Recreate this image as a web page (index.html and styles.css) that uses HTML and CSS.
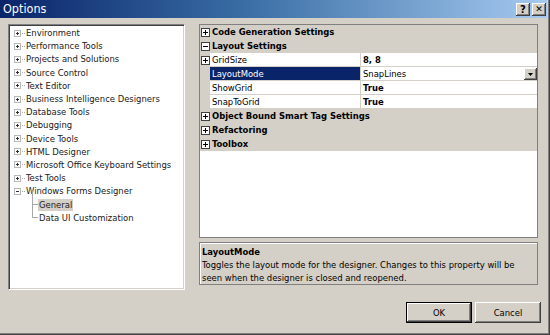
FILE: index.html
```html
<!DOCTYPE html>
<html lang="en">
<head>
    <meta charset="UTF-8">
    <title>Options</title>
    <link rel="stylesheet" href="styles.css">
</head>
<body>
    <div class="window">
        <div class="titlebar">
            <span class="title">Options</span>
            <div class="caption-buttons">
                <span class="cap-btn">?</span>
                <span class="cap-btn close">&#x2715;</span>
            </div>
        </div>

        <div class="main">
            <div class="tree">
                <div class="node"><svg class="box" width="9" height="9"><rect x="1.5" y="1.5" width="6" height="6" fill="#fff" stroke="#b8b8b8"/><path d="M3 4.5h3M4.5 3v3" stroke="#303030"/></svg><span class="dots"></span><span class="label">Environment</span></div>
                <div class="node"><svg class="box" width="9" height="9"><rect x="1.5" y="1.5" width="6" height="6" fill="#fff" stroke="#b8b8b8"/><path d="M3 4.5h3M4.5 3v3" stroke="#303030"/></svg><span class="dots"></span><span class="label">Performance Tools</span></div>
                <div class="node"><svg class="box" width="9" height="9"><rect x="1.5" y="1.5" width="6" height="6" fill="#fff" stroke="#b8b8b8"/><path d="M3 4.5h3M4.5 3v3" stroke="#303030"/></svg><span class="dots"></span><span class="label">Projects and Solutions</span></div>
                <div class="node"><svg class="box" width="9" height="9"><rect x="1.5" y="1.5" width="6" height="6" fill="#fff" stroke="#b8b8b8"/><path d="M3 4.5h3M4.5 3v3" stroke="#303030"/></svg><span class="dots"></span><span class="label">Source Control</span></div>
                <div class="node"><svg class="box" width="9" height="9"><rect x="1.5" y="1.5" width="6" height="6" fill="#fff" stroke="#b8b8b8"/><path d="M3 4.5h3M4.5 3v3" stroke="#303030"/></svg><span class="dots"></span><span class="label">Text Editor</span></div>
                <div class="node"><svg class="box" width="9" height="9"><rect x="1.5" y="1.5" width="6" height="6" fill="#fff" stroke="#b8b8b8"/><path d="M3 4.5h3M4.5 3v3" stroke="#303030"/></svg><span class="dots"></span><span class="label">Business Intelligence Designers</span></div>
                <div class="node"><svg class="box" width="9" height="9"><rect x="1.5" y="1.5" width="6" height="6" fill="#fff" stroke="#b8b8b8"/><path d="M3 4.5h3M4.5 3v3" stroke="#303030"/></svg><span class="dots"></span><span class="label">Database Tools</span></div>
                <div class="node"><svg class="box" width="9" height="9"><rect x="1.5" y="1.5" width="6" height="6" fill="#fff" stroke="#b8b8b8"/><path d="M3 4.5h3M4.5 3v3" stroke="#303030"/></svg><span class="dots"></span><span class="label">Debugging</span></div>
                <div class="node"><svg class="box" width="9" height="9"><rect x="1.5" y="1.5" width="6" height="6" fill="#fff" stroke="#b8b8b8"/><path d="M3 4.5h3M4.5 3v3" stroke="#303030"/></svg><span class="dots"></span><span class="label">Device Tools</span></div>
                <div class="node"><svg class="box" width="9" height="9"><rect x="1.5" y="1.5" width="6" height="6" fill="#fff" stroke="#b8b8b8"/><path d="M3 4.5h3M4.5 3v3" stroke="#303030"/></svg><span class="dots"></span><span class="label">HTML Designer</span></div>
                <div class="node"><svg class="box" width="9" height="9"><rect x="1.5" y="1.5" width="6" height="6" fill="#fff" stroke="#b8b8b8"/><path d="M3 4.5h3M4.5 3v3" stroke="#303030"/></svg><span class="dots"></span><span class="label">Microsoft Office Keyboard Settings</span></div>
                <div class="node"><svg class="box" width="9" height="9"><rect x="1.5" y="1.5" width="6" height="6" fill="#fff" stroke="#b8b8b8"/><path d="M3 4.5h3M4.5 3v3" stroke="#303030"/></svg><span class="dots"></span><span class="label">Test Tools</span></div>
                <div class="node"><svg class="box" width="9" height="9"><rect x="1.5" y="1.5" width="6" height="6" fill="#fff" stroke="#b8b8b8"/><path d="M3 4.5h3" stroke="#303030"/></svg><span class="dots"></span><span class="label">Windows Forms Designer</span></div>
                <div class="children">
                    <div class="node child"><span class="branch"></span><span class="label selected">General</span></div>
                    <div class="node child"><span class="branch"></span><span class="label">Data UI Customization</span></div>
                </div>
            </div>

            <div class="right">
                <div class="grid">
                    <div class="category">
                        <span class="margin"><svg class="box" width="9" height="9"><rect x="0.5" y="0.5" width="8" height="8" fill="#fff" stroke="#404040"/><path d="M2 4.5h5M4.5 2v5" stroke="#000"/></svg></span>
                        <span class="cat-name">Code Generation Settings</span>
                    </div>
                    <div class="category">
                        <span class="margin"><svg class="box" width="9" height="9"><rect x="0.5" y="0.5" width="8" height="8" fill="#fff" stroke="#404040"/><path d="M2 4.5h5" stroke="#000"/></svg></span>
                        <span class="cat-name">Layout Settings</span>
                    </div>
                    <div class="prop">
                        <span class="margin"><svg class="box" width="9" height="9"><rect x="0.5" y="0.5" width="8" height="8" fill="#fff" stroke="#404040"/><path d="M2 4.5h5M4.5 2v5" stroke="#000"/></svg></span>
                        <span class="name">GridSize</span>
                        <span class="value bold">8, 8</span>
                    </div>
                    <div class="prop">
                        <span class="margin"></span>
                        <span class="name selected">LayoutMode</span>
                        <span class="value">SnapLines<span class="drop"><svg width="5" height="3"><path d="M0 0h5l-2.5 3z" fill="#000"/></svg></span></span>
                    </div>
                    <div class="prop">
                        <span class="margin"></span>
                        <span class="name">ShowGrid</span>
                        <span class="value bold">True</span>
                    </div>
                    <div class="prop">
                        <span class="margin"></span>
                        <span class="name">SnapToGrid</span>
                        <span class="value bold">True</span>
                    </div>
                    <div class="category">
                        <span class="margin"><svg class="box" width="9" height="9"><rect x="0.5" y="0.5" width="8" height="8" fill="#fff" stroke="#404040"/><path d="M2 4.5h5M4.5 2v5" stroke="#000"/></svg></span>
                        <span class="cat-name">Object Bound Smart Tag Settings</span>
                    </div>
                    <div class="category">
                        <span class="margin"><svg class="box" width="9" height="9"><rect x="0.5" y="0.5" width="8" height="8" fill="#fff" stroke="#404040"/><path d="M2 4.5h5M4.5 2v5" stroke="#000"/></svg></span>
                        <span class="cat-name">Refactoring</span>
                    </div>
                    <div class="category">
                        <span class="margin"><svg class="box" width="9" height="9"><rect x="0.5" y="0.5" width="8" height="8" fill="#fff" stroke="#404040"/><path d="M2 4.5h5M4.5 2v5" stroke="#000"/></svg></span>
                        <span class="cat-name">Toolbox</span>
                    </div>
                </div>

                <div class="desc">
                    <div class="desc-title">LayoutMode</div>
                    <div class="desc-text">Toggles the layout mode for the designer. Changes to this property will be<br>seen when the designer is closed and reopened.</div>
                </div>
            </div>
        </div>

        <div class="footer">
            <button class="btn default">OK</button>
            <button class="btn">Cancel</button>
        </div>
    </div>
</body>
</html>
```

FILE: styles.css
```css
* {
    margin: 0;
    padding: 0;
    box-sizing: border-box;
}

body {
    width: 550px;
    height: 335px;
    overflow: hidden;
    font-family: 'DejaVu Sans Condensed', 'DejaVu Sans', sans-serif;
    font-size: 9.4px;
    color: #000;
    background: #d4d0c8;
}

.window {
    width: 550px;
    height: 335px;
    background: #d4d0c8;
    padding: 0 3px 3px 0;
    box-shadow: inset -1px -1px #404040, inset -2px -2px #808080;
}

/* title bar */
.titlebar {
    height: 18px;
    display: flex;
    align-items: center;
    justify-content: space-between;
    padding: 0 1px 0 3px;
    background: linear-gradient(to right, #0a246a 0%, #3a6ea5 45%, #a6caf0 100%);
}

.title {
    color: #fff;
    font-size: 12.5px;
    line-height: 18px;
}

.caption-buttons {
    display: flex;
    gap: 2px;
}

.cap-btn {
    width: 14px;
    height: 13px;
    display: flex;
    align-items: center;
    justify-content: center;
    background: #d4d0c8;
    font-family: 'DejaVu Sans', sans-serif;
    font-size: 10px;
    font-weight: bold;
    box-shadow: inset -1px -1px #404040, inset 1px 1px #fff, inset -2px -2px #808080;
}

.cap-btn.close {
    font-size: 9px;
}

/* main area */
.main {
    display: flex;
    gap: 14px;
    padding: 6px 0 0 8px;
}

.tree {
    width: 177px;
    height: 266px;
    background: #fff;
    border: 1px solid;
    border-color: #808080 #fff #fff #808080;
    box-shadow: inset 1px 1px #404040, inset -1px -1px #d4d0c8;
    padding: 1.5px 0 0 4px;
}

.node {
    height: 13.2px;
    display: flex;
    align-items: center;
    white-space: nowrap;
    color: #202020;
}

.box {
    display: block;
    flex: none;
}

.dots {
    width: 3px;
    border-top: 1px dotted #b0b0b0;
}

.label {
    padding: 0 1px;
    line-height: 12px;
}

.children {
    position: relative;
}

.child {
    padding-left: 19px;
}

.branch {
    width: 6px;
    border-top: 1px solid #a8a8a8;
}

.children::before {
    content: '';
    position: absolute;
    left: 19px;
    top: -7px;
    height: 27px;
    border-left: 1px solid #a8a8a8;
}

.label.selected {
    background: #d4d0c8;
}

/* property grid */
.right {
    width: 339px;
    display: flex;
    flex-direction: column;
    gap: 4px;
}

.grid {
    height: 214px;
    background: #fff;
    border: 1px solid #808080;
}

.category, .prop {
    height: 14px;
    display: flex;
    align-items: stretch;
    white-space: nowrap;
}

.category {
    background: #d4d0c8;
}

.margin {
    width: 10px;
    flex: none;
    display: flex;
    align-items: center;
    padding-left: 1px;
    background: #d4d0c8;
}

.cat-name {
    font-weight: bold;
    padding-left: 2px;
    line-height: 14px;
}

.prop .name, .prop .value {
    line-height: 13px;
    border-bottom: 1px solid #d4d0c8;
    padding-left: 2px;
}

.name {
    width: 151px;
    flex: none;
    border-right: 1px solid #d4d0c8;
}

.name.selected {
    background: #0a246a;
    color: #fff;
}

.value {
    flex: 1;
    display: flex;
    justify-content: space-between;
}

.bold {
    font-weight: bold;
}

.drop {
    width: 13px;
    height: 12px;
    margin: 1px 0 0;
    display: flex;
    align-items: center;
    justify-content: center;
    background: #d4d0c8;
    box-shadow: inset -1px -1px #404040, inset 1px 1px #fff, inset -2px -2px #808080;
}

.drop svg {
    display: block;
}

/* description */
.desc {
    height: 43px;
    border: 1px solid #808080;
    box-shadow: inset 1px 1px #fff;
    padding: 2px 2px 0;
    line-height: 13px;
}

.desc-title {
    font-weight: bold;
}

/* buttons */
.footer {
    display: flex;
    justify-content: flex-end;
    gap: 3px;
    margin-top: 12px;
    padding-right: 6px;
}

.btn {
    width: 66px;
    height: 21px;
    border: none;
    background: #d4d0c8;
    font-family: inherit;
    font-size: 9.4px;
    color: #000;
    box-shadow: inset -1px -1px #404040, inset 1px 1px #fff, inset -2px -2px #808080;
}

.btn.default {
    border: 1px solid #000;
}
```
